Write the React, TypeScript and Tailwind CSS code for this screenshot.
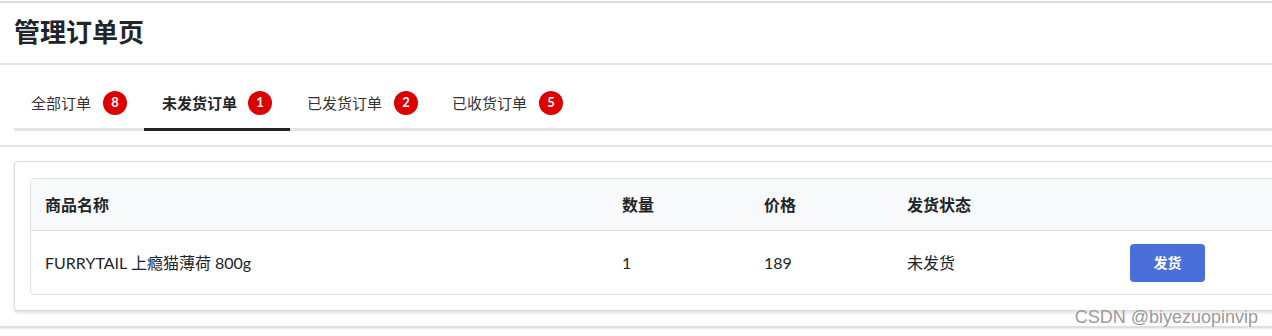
import React from "react";

const tabs = [
  { label: "全部订单", count: 8 },
  { label: "未发货订单", count: 1, active: true },
  { label: "已发货订单", count: 2 },
  { label: "已收货订单", count: 5 },
];

const cols = "grid grid-cols-[577px_142px_143px_223px_1fr]";

export default function App() {
  return (
    <div
      className="relative h-[336px] w-full overflow-hidden bg-white text-[#212529]"
      style={{ fontFamily: 'Lato, "Noto Sans CJK SC", sans-serif' }}
    >
      <div className="mt-px h-[2px] bg-[#dcdcdc]" />

      {/* header */}
      <div className="flex h-[60px] items-center px-[14px] pb-[2px]">
        <h1 className="text-[26px] font-bold leading-none">管理订单页</h1>
      </div>
      <div className="h-[2px] bg-[#e4e4e4]" />

      {/* tabs */}
      <div className="pl-[14px] pt-[13px] pb-[14px]">
        <ul className="flex border-b-[3px] border-[#e4e4e4]">
          {tabs.map((t) => (
            <li
              key={t.label}
              className={
                t.active
                  ? "-mb-[3px] flex h-[53px] items-center gap-[11px] border-b-[3px] border-[#212529] px-[18px] text-[15px] font-bold"
                  : "-mb-[3px] flex h-[53px] items-center gap-[12px] border-b-[3px] border-transparent px-[17px] text-[15px] text-[#333]"
              }
            >
              <span>{t.label}</span>
              <span className="flex h-[24px] w-[24px] items-center justify-center rounded-full bg-[#dd0000] text-[13px] font-bold text-white">
                {t.count}
              </span>
            </li>
          ))}
        </ul>
      </div>
      <div className="h-[2px] bg-[#e4e4e4]" />

      {/* content */}
      <div className="pt-[14px] pl-[14px]">
        <div className="w-[1400px] rounded-[4px] border border-[#dcdcdc] bg-white px-[15px] pt-[16px] pb-[15px] shadow-[0_2px_3px_rgba(0,0,0,0.12)]">
          <div className="w-[1360px] rounded-[4px] border border-[#dee2e6]">
            <div className={`${cols} h-[52px] items-center border-b border-[#dee2e6] bg-[#f8f9fa] text-[16px] font-bold`}>
              <div className="pl-[14px]">商品名称</div>
              <div className="pl-[14px]">数量</div>
              <div className="pl-[14px]">价格</div>
              <div className="pl-[14px]">发货状态</div>
              <div />
            </div>
            <div className={`${cols} h-[63px] items-center text-[16px]`}>
              <div className="pl-[14px]">FURRYTAIL 上瘾猫薄荷 800g</div>
              <div className="pl-[14px]">1</div>
              <div className="pl-[14px]">189</div>
              <div className="pl-[14px]">未发货</div>
              <div className="pl-[14px]">
                <button className="h-[38px] w-[75px] rounded-[4px] bg-[#4a6fdb] text-[14px] font-bold text-white">
                  发货
                </button>
              </div>
            </div>
          </div>
        </div>
      </div>
      <div className="mt-[15px] h-[2px] bg-[#dedede] shadow-[0_1px_2px_rgba(0,0,0,0.1)]" />

      <div
        className="absolute right-[14px] top-[304px] text-[18px] text-[#9a9a9a] [text-shadow:0_0_2px_#fff]"
        style={{ fontFamily: '"Liberation Sans", Arial, sans-serif' }}
      >
        CSDN @biyezuopinvip
      </div>
    </div>
  );
}
